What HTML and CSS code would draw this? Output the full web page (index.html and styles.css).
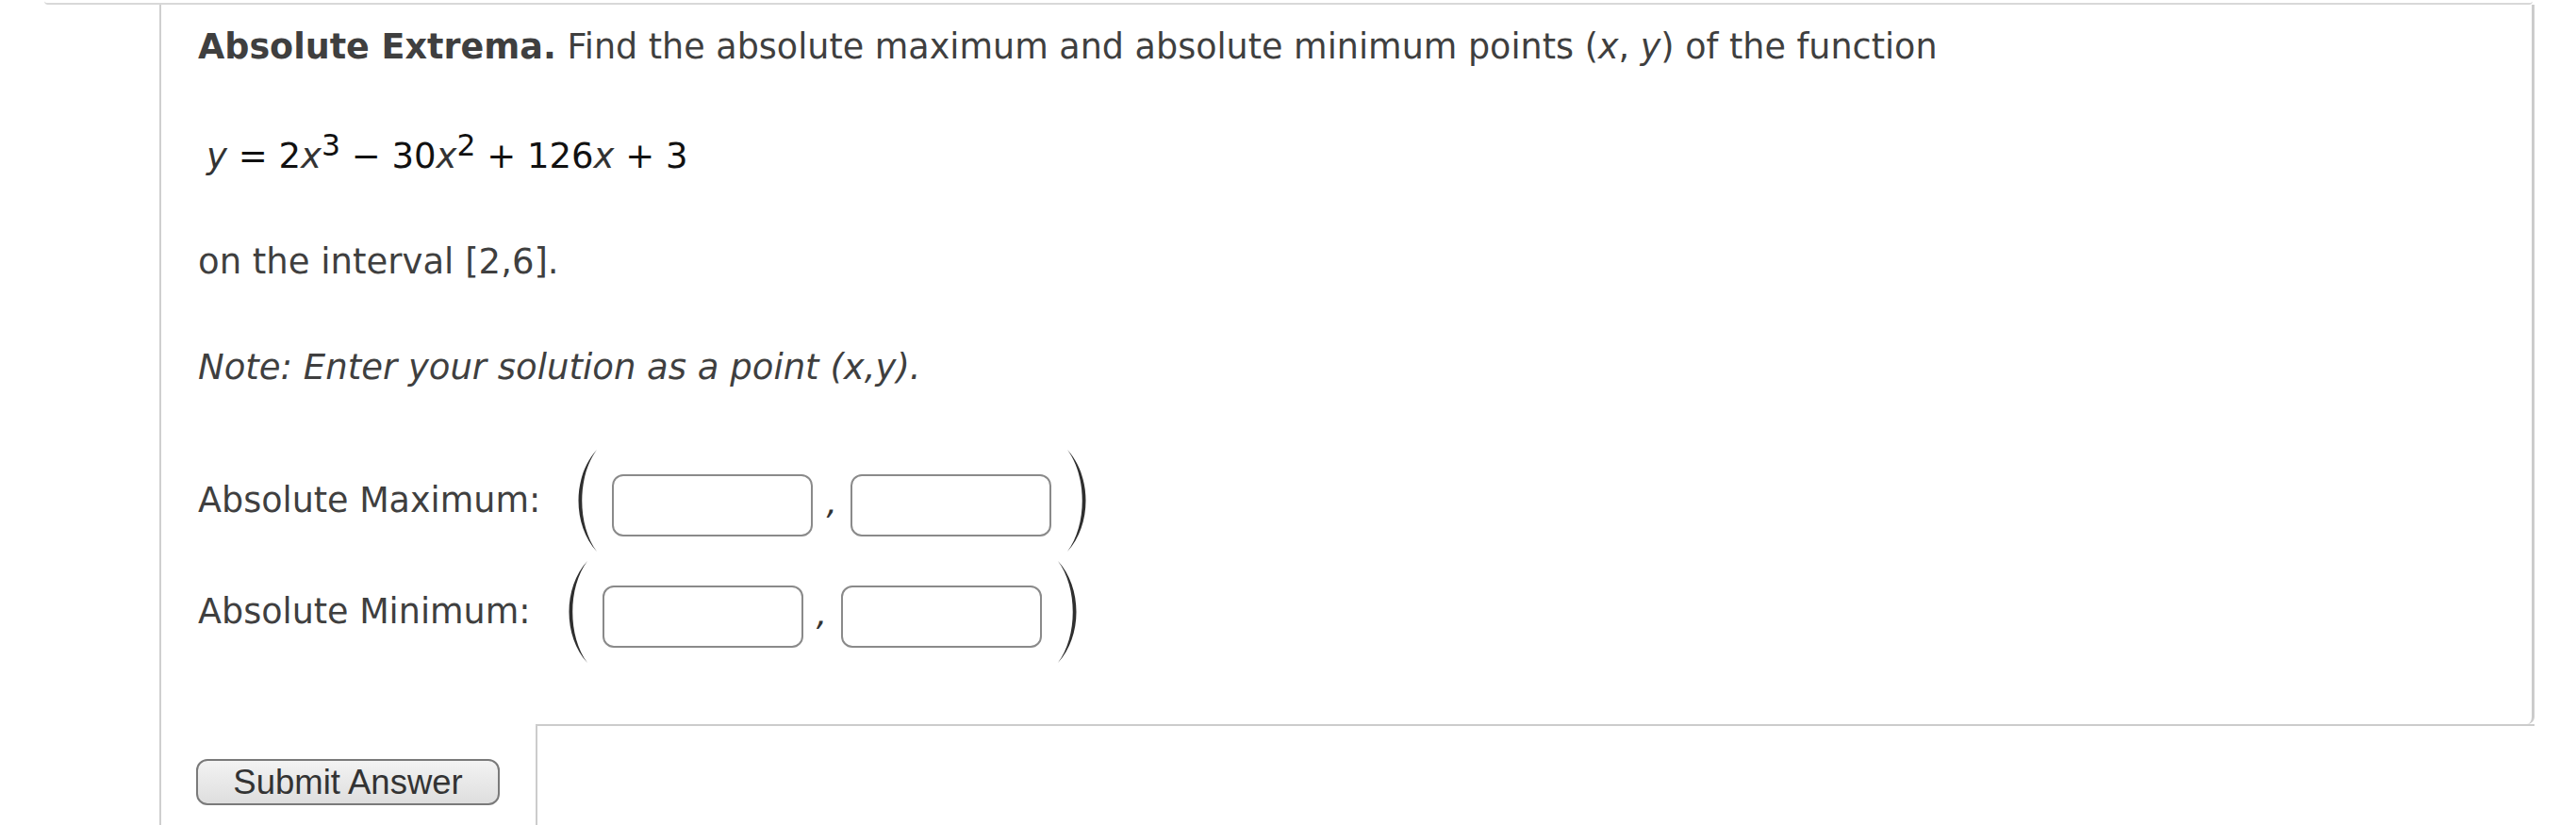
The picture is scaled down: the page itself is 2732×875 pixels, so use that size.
FILE: index.html
```html
<!DOCTYPE html>
<html lang="en">
<head>
    <meta charset="UTF-8">
    <title>Absolute Extrema</title>
    <link rel="stylesheet" href="styles.css">
</head>
<body>
    <div class="prev-box"></div>

    <div class="question">
        <div class="gutter"></div>

        <div class="main">
            <div class="qbody">
                <p class="prompt"><strong>Absolute Extrema.</strong> Find the absolute maximum and absolute minimum points (<i>x</i>, <i>y</i>) of the function</p>

                <p class="equation"><i>y</i> = 2<i>x</i><sup>3</sup> &minus; 30<i>x</i><sup>2</sup> + 126<i>x</i> + 3</p>

                <p class="wide">on the interval [2,6].</p>

                <p class="wide note">Note: Enter your solution as a point (x,y).</p>

                <div class="answer-row">
                    <span class="answer-label">Absolute Maximum:</span>
                    <div class="point">
                        <svg class="paren" width="24" height="108" viewBox="0 0 24 108"><path d="M22 0 C-4 28 -4 80 22 108 C1 80 1 28 22 0 Z"/></svg>
                        <input type="text" class="answer-box">
                        <span class="comma">,</span>
                        <input type="text" class="answer-box">
                        <svg class="paren paren-right" width="24" height="108" viewBox="0 0 24 108"><path d="M2 0 C28 28 28 80 2 108 C23 80 23 28 2 0 Z"/></svg>
                    </div>
                </div>

                <div class="answer-row">
                    <span class="answer-label">Absolute Minimum:</span>
                    <div class="point">
                        <svg class="paren" width="24" height="108" viewBox="0 0 24 108"><path d="M22 0 C-4 28 -4 80 22 108 C1 80 1 28 22 0 Z"/></svg>
                        <input type="text" class="answer-box">
                        <span class="comma">,</span>
                        <input type="text" class="answer-box">
                        <svg class="paren paren-right" width="24" height="108" viewBox="0 0 24 108"><path d="M2 0 C28 28 28 80 2 108 C23 80 23 28 2 0 Z"/></svg>
                    </div>
                </div>
            </div>

            <div class="footer">
                <div class="submit-cell">
                    <button type="button" class="submit-btn">Submit Answer</button>
                </div>
                <div class="feedback"></div>
            </div>
        </div>
    </div>
</body>
</html>
```

FILE: styles.css
```css
* {
    margin: 0;
    padding: 0;
    box-sizing: border-box;
}

body {
    background: #fff;
    color: #3f3f3f;
    font-family: "DejaVu Sans", Verdana, sans-serif;
    font-size: 36.5px;
    line-height: 44px;
    overflow: hidden;
    height: 875px;
}

/* bottom edge of the question above */
.prev-box {
    margin-left: 47px;
    width: 2639px;
    height: 5px;
    border-bottom: 2px solid #d8d8d8;
    border-radius: 0 0 4px 4px;
}

.question {
    display: flex;
    height: 870px;
}

.gutter {
    width: 171px;
    border-right: 2px solid #cfcfcf;
}

.main {
    width: 2517px;
    display: flex;
    flex-direction: column;
}

/* question text + answer inputs */
.qbody {
    height: 763px;
    padding: 23px 0 0 39px;
    border-right: 3px solid #cccccc;
    border-bottom-right-radius: 8px;
}

.qbody p {
    margin-bottom: 68px;
}

.qbody .prompt {
    margin-bottom: 72px;
}

.prompt strong {
    font-weight: bold;
}

.wide {
    font-size: 37px;
}

.equation {
    color: #111;
    font-size: 37px;
    padding-left: 9px;
}

.equation i {
    color: #333;
}

.equation sup {
    font-size: 0.85em;
    line-height: 0;
    vertical-align: 0.4em;
}

.note {
    font-style: italic;
}

.answer-row {
    display: flex;
    align-items: center;
    height: 108px;
    margin-top: -3px;
    margin-bottom: 13px;
}

.answer-label {
    margin-right: 38px;
}

.point {
    display: flex;
    align-items: center;
}

.paren {
    fill: #2f2f2f;
}

.paren-right {
    margin-left: 15px;
}

.answer-box {
    width: 213px;
    height: 66px;
    margin: 10px 0 0 14px;
    border: 2px solid #8a8a8a;
    border-radius: 12px;
    background: #fff;
}

.comma {
    width: 40px;
    margin-right: -14px;
    padding-top: 4px;
    text-align: center;
    font-size: 36px;
    line-height: 44px;
    font-style: italic;
    color: #333;
}

/* submit row */
.footer {
    display: flex;
    flex: 1;
}

.submit-cell {
    width: 397px;
    padding: 37px 0 0 37px;
}

.submit-btn {
    width: 322px;
    height: 49px;
    font-family: "Liberation Sans", Arial, sans-serif;
    font-size: 36.5px;
    line-height: 45px;
    color: #333;
    background: linear-gradient(#f3f3f3, #dedede);
    border: 2px solid #7a7a7a;
    border-radius: 12px;
}

.feedback {
    flex: 1;
    border-top: 2px solid #cccccc;
    border-left: 2px solid #cccccc;
}
```
